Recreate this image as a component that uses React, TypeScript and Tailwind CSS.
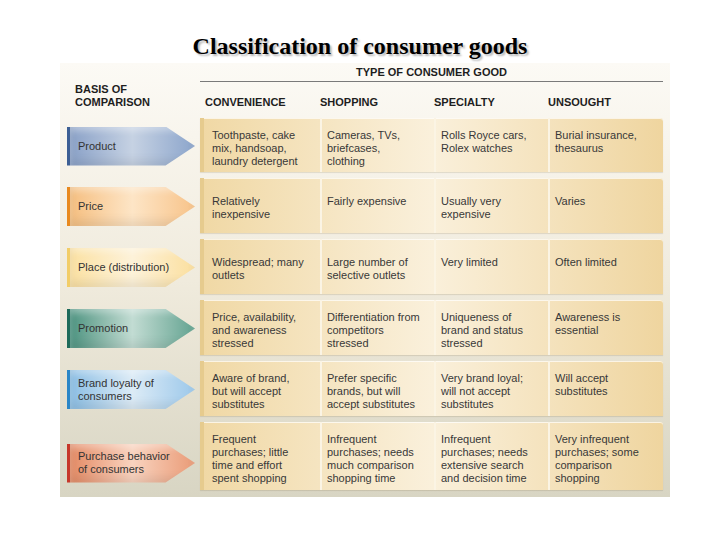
import React from "react";

type Row = {
  label: string[];
  arrow: string;
  cells: string[][];
  tall?: boolean;
  low?: boolean;
};

const rows: Row[] = [
  {
    label: ["Product"],
    arrow: "border-[#3d5f94] from-[#8aa1c7] via-[#c6d2e3] to-[#8ca5cb]",
    cells: [
      ["Toothpaste, cake", "mix, handsoap,", "laundry detergent"],
      ["Cameras, TVs,", "briefcases,", "clothing"],
      ["Rolls Royce cars,", "Rolex watches"],
      ["Burial insurance,", "thesaurus"],
    ],
  },
  {
    label: ["Price"],
    arrow: "border-[#e8891f] from-[#f5bf80] via-[#fde5c6] to-[#f7c389]",
    low: true,
    cells: [
      ["Relatively", "inexpensive"],
      ["Fairly expensive"],
      ["Usually very", "expensive"],
      ["Varies"],
    ],
  },
  {
    label: ["Place (distribution)"],
    arrow: "border-[#f2cd68] from-[#fbe1a2] via-[#fdf2d9] to-[#fbdf9e]",
    low: true,
    cells: [
      ["Widespread; many", "outlets"],
      ["Large number of", "selective outlets"],
      ["Very limited"],
      ["Often limited"],
    ],
  },
  {
    label: ["Promotion"],
    arrow: "border-[#1d6a59] from-[#4c9481] via-[#c2dcd3] to-[#62a391]",
    cells: [
      ["Price, availability,", "and awareness", "stressed"],
      ["Differentiation from", "competitors", "stressed"],
      ["Uniqueness of", "brand and status", "stressed"],
      ["Awareness is", "essential"],
    ],
  },
  {
    label: ["Brand loyalty of", "consumers"],
    arrow: "border-[#2a86c7] from-[#8bbee4] via-[#dcebf6] to-[#9cc8ea]",
    cells: [
      ["Aware of brand,", "but will accept", "substitutes"],
      ["Prefer specific", "brands, but will", "accept substitutes"],
      ["Very brand loyal;", "will not accept", "substitutes"],
      ["Will accept", "substitutes"],
    ],
  },
  {
    label: ["Purchase behavior", "of consumers"],
    arrow: "border-[#c6372a] from-[#e38a64] via-[#f8d3bf] to-[#e99b77]",
    tall: true,
    cells: [
      ["Frequent", "purchases; little", "time and effort", "spent shopping"],
      ["Infrequent", "purchases; needs", "much comparison", "shopping time"],
      ["Infrequent", "purchases; needs", "extensive search", "and decision time"],
      ["Very infrequent", "purchases; some", "comparison", "shopping"],
    ],
  },
];

const cellWidths = ["w-[120px]", "w-[114px]", "w-[114px]", "w-[115px]"];

function Arrow({ row }: { row: Row }) {
  return (
    <div
      className={`h-[39px] w-[128px] border-l-[3px] bg-linear-to-r ${row.arrow} flex items-center pl-[8px] text-[11px] leading-[13px] text-[#333] shadow-[inset_0_-6px_8px_rgba(0,0,0,0.08),inset_0_4px_6px_rgba(255,255,255,0.35)] [clip-path:polygon(0_0,77%_0,100%_50%,77%_100%,0_100%)]`}
    >
      <div>
        {row.label.map((l) => (
          <div key={l}>{l}</div>
        ))}
      </div>
    </div>
  );
}

export default function App() {
  return (
    <div className="min-h-[540px] w-[720px] bg-white font-['Liberation_Sans',Arial,sans-serif]">
      <h1 className="pt-[31px] text-center font-['Liberation_Serif','Times_New_Roman',serif] text-[24px] font-bold leading-[30px] text-black [text-shadow:2px_2px_2px_rgba(0,0,0,0.28)]">
        Classification of consumer goods
      </h1>

      <div className="ml-[60px] mt-[2px] h-[434px] w-[610px] bg-linear-to-b from-[#fcfaf5] via-[#f0ebdd] to-[#d8d5c3] pb-[7px] pr-[7px]">
        {/* Header */}
        <div className="flex h-[55px] text-[11px] font-bold leading-[13px] text-[#1e1e1e]">
          <div className="w-[140px] pl-[15px] pt-[20px]">
            <div>BASIS OF</div>
            <div>COMPARISON</div>
          </div>
          <div className="flex-1 pt-[3px]">
            <div className="border-b border-[#7a7a7a] pb-[2px] text-center">TYPE OF CONSUMER GOOD</div>
            <div className="mt-[14px] flex">
              <div className="w-[120px] pl-[5px]">CONVENIENCE</div>
              <div className="w-[114px]">SHOPPING</div>
              <div className="w-[114px]">SPECIALTY</div>
              <div className="w-[115px]">UNSOUGHT</div>
            </div>
          </div>
        </div>

        {/* Rows */}
        <div className="flex flex-col gap-[6px]">
          {rows.map((row, ri) => (
            <div key={ri} className={`flex ${row.tall ? "h-[68px]" : ri === 0 ? "h-[54px]" : "h-[55px]"}`}>
              <div className={`flex w-[140px] items-center pl-[7px] ${row.tall ? "pt-[14px]" : "pt-[2px]"}`}>
                <Arrow row={row} />
              </div>
              <div className="flex flex-1 rounded-tr-[3px] bg-linear-to-r from-[#f0d8a4] via-[#faf0db] to-[#efd59f] shadow-[inset_0_1px_0_rgba(255,255,255,0.7),0_1px_1px_rgba(120,100,60,0.18)]">
                {row.cells.map((c, ci) => (
                  <div
                    key={ci}
                    className={`${cellWidths[ci]} ${row.low ? "pt-[17px]" : "pt-[11px]"} text-[11px] leading-[13px] text-[#383838] ${
                      ci === 0
                        ? "border-l-[4px] border-[#e6cb8e] pl-[8px]"
                        : "border-l-2 border-[#fbf4e4] pl-[5px]"
                    }`}
                  >
                    {c.map((l) => (
                      <div key={l}>{l}</div>
                    ))}
                  </div>
                ))}
              </div>
            </div>
          ))}
        </div>
      </div>
    </div>
  );
}
